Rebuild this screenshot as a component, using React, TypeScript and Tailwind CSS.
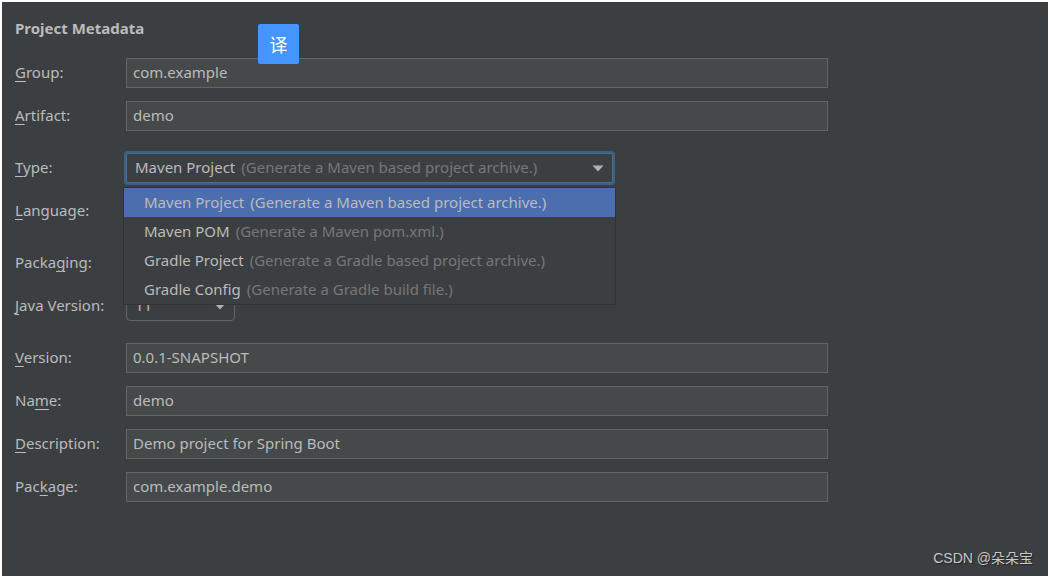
import { useState } from "react";
import type { ReactNode } from "react";

const projectTypes = [
  { name: "Maven Project", hint: "(Generate a Maven based project archive.)" },
  { name: "Maven POM", hint: "(Generate a Maven pom.xml.)" },
  { name: "Gradle Project", hint: "(Generate a Gradle based project archive.)" },
  { name: "Gradle Config", hint: "(Generate a Gradle build file.)" },
];

// "&" marks the mnemonic letter, e.g. "Packa&ging"
function Row({ id, label, children }: { id: string; label: string; children: ReactNode }) {
  const [before, after] = label.split("&");
  return (
    <div className="flex h-[30px] items-center">
      <label htmlFor={id} className="w-[111px] shrink-0 pb-0.5 whitespace-nowrap">
        {before}
        <span className="underline underline-offset-3">{after[0]}</span>
        {after.slice(1)}:
      </label>
      {children}
    </div>
  );
}

function TextRow({ id, label, value }: { id: string; label: string; value: string }) {
  return (
    <Row id={id} label={label}>
      <input
        id={id}
        type="text"
        defaultValue={value}
        className="h-full min-w-0 flex-1 border border-[#646464] bg-[#45494a] px-1.5 pb-0.5 outline-none"
      />
    </Row>
  );
}

function Arrow() {
  return (
    <svg viewBox="0 0 12 7" className="pointer-events-none h-[7px] w-3 shrink-0 fill-[#afb1b3]" aria-hidden="true">
      <path d="M0.5 0.5h11L6 6.5z" />
    </svg>
  );
}

function SelectRow({ id, label, options }: { id: string; label: string; options: string[] }) {
  return (
    <Row id={id} label={label}>
      <div className="flex h-full w-[109px] items-center rounded-sm border border-[#646464] pr-2">
        <select id={id} className="min-w-0 flex-1 appearance-none bg-[#3c3f41] pb-0.5 pl-2 outline-none">
          {options.map((o) => (
            <option key={o}>{o}</option>
          ))}
        </select>
        <Arrow />
      </div>
    </Row>
  );
}

function TypeRow() {
  const [open, setOpen] = useState(true);
  const [selected, setSelected] = useState(0);

  return (
    <Row id="type" label="&Type">
      <div className="relative w-full max-w-[487px]">
        <div
          className="flex h-[30px] items-center gap-1.5 rounded-xs border border-[#466d94] pr-2 pl-2 ring-2 ring-[#3d6185]"
          onMouseDown={(e) => {
            e.preventDefault();
            setOpen(!open);
          }}
        >
          <select
            id="type"
            value={selected}
            onChange={(e) => setSelected(Number(e.target.value))}
            className="field-sizing-content appearance-none bg-[#3c3f41] pb-0.5 outline-none"
          >
            {projectTypes.map((t, i) => (
              <option key={t.name} value={i}>
                {t.name}
              </option>
            ))}
          </select>
          <span className="flex-1 truncate pb-0.5 text-[#777777]">{projectTypes[selected].hint}</span>
          <Arrow />
        </div>

        {open && (
          <ul
            role="listbox"
            aria-label="Type"
            className="absolute -inset-x-[3px] top-[34px] z-10 border border-[#323232] bg-[#3c3f41]"
          >
            {projectTypes.map((t, i) => (
              <li
                key={t.name}
                role="option"
                aria-selected={i === selected}
                onClick={() => {
                  setSelected(i);
                  setOpen(false);
                }}
                className={`flex h-[29px] items-center gap-1.5 pb-0.5 pl-5 whitespace-nowrap ${i === selected ? "bg-[#4b6eaf]" : ""}`}
              >
                <span>{t.name}</span>
                <span className={i === selected ? "" : "text-[#777777]"}>{t.hint}</span>
              </li>
            ))}
          </ul>
        )}
      </div>
    </Row>
  );
}

export default function App() {
  return (
    <div className="flex min-h-screen bg-white pt-0.5 pr-px pl-0.5 font-['Noto_Sans','Noto_Sans_CJK_SC',sans-serif] text-[15px] leading-5 text-[#bbbbbb]">
      <main className="relative flex-1 bg-[#3c3f41] px-[13px] pt-4 pb-10">
        <h1 className="font-bold">Project Metadata</h1>

        <form className="mt-5 flex max-w-[813px] flex-col gap-[22px]">
          <div className="flex flex-col gap-[13px]">
            <TextRow id="group" label="&Group" value="com.example" />
            <TextRow id="artifact" label="&Artifact" value="demo" />
          </div>
          <div className="flex flex-col gap-[13px]">
            <TypeRow />
            <SelectRow id="language" label="&Language" options={["Java", "Kotlin", "Groovy"]} />
          </div>
          <div className="flex flex-col gap-[13px]">
            <SelectRow id="packaging" label="Packa&ging" options={["Jar", "War"]} />
            <SelectRow id="java-version" label="&Java Version" options={["11", "8", "17"]} />
          </div>
          <div className="flex flex-col gap-[13px]">
            <TextRow id="version" label="&Version" value="0.0.1-SNAPSHOT" />
            <TextRow id="name" label="Na&me" value="demo" />
            <TextRow id="description" label="&Description" value="Demo project for Spring Boot" />
            <TextRow id="package" label="Pac&kage" value="com.example.demo" />
          </div>
        </form>

        {/* floating translate button */}
        <button
          type="button"
          className="absolute top-[22px] left-64 h-10 w-[41px] rounded-xs bg-[#4595ff] font-['Noto_Sans_CJK_SC',sans-serif] text-lg text-white"
        >
          译
        </button>

        <p className="absolute right-[15px] bottom-2 font-['Liberation_Sans','Noto_Sans_CJK_SC',sans-serif] text-sm text-[#c8c8c8] [text-shadow:1px_1px_1px_#222222]">
          CSDN @朵朵宝
        </p>
      </main>
    </div>
  );
}
